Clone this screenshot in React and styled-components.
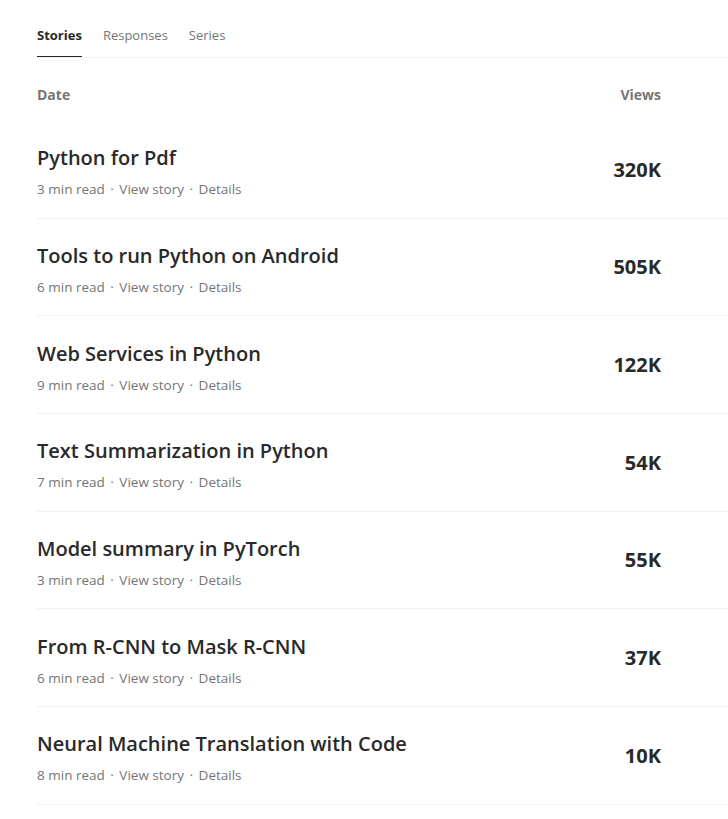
import styled, { createGlobalStyle } from "styled-components";

const stories = [
  { title: "Python for Pdf", read: 3, views: "320K" },
  { title: "Tools to run Python on Android", read: 6, views: "505K" },
  { title: "Web Services in Python", read: 9, views: "122K" },
  { title: "Text Summarization in Python", read: 7, views: "54K" },
  { title: "Model summary in PyTorch", read: 3, views: "55K" },
  { title: "From R-CNN to Mask R-CNN", read: 6, views: "37K" },
  { title: "Neural Machine Translation with Code", read: 8, views: "10K" },
];

const Global = createGlobalStyle`
  body {
    margin: 0;
    background: #fff;
    font-family: "Open Sans", "Noto Sans", sans-serif;
    color: #292929;
  }
`;

export default function App() {
  return (
    <Page>
      <Global />
      <Tabs>
        <Tab className="active">Stories</Tab>
        <Tab>Responses</Tab>
        <Tab>Series</Tab>
      </Tabs>
      <Head>
        <HeadCell>Date</HeadCell>
        <HeadCell className="right">Views</HeadCell>
      </Head>
      {stories.map((s) => (
        <Row key={s.title}>
          <Info>
            <Title>{s.title}</Title>
            <Meta>
              {s.read} min read <Dot>·</Dot> View story <Dot>·</Dot> Details
            </Meta>
          </Info>
          <Views>{s.views}</Views>
        </Row>
      ))}
    </Page>
  );
}

const Page = styled.div`
  padding-left: 37px;
  overflow: hidden;
`;

const Tabs = styled.div`
  display: flex;
  gap: 21px;
  border-bottom: 1px solid #f2f2f2;
`;

const Tab = styled.div`
  padding: 25px 0 11px;
  font-size: 13px;
  line-height: 20px;
  color: #757575;
  border-bottom: 1px solid transparent;

  &.active {
    color: #292929;
    font-weight: 700;
    border-bottom-color: #292929;
  }
`;

const Head = styled.div`
  display: flex;
  justify-content: space-between;
  padding: 27px 0 16px;
`;

const HeadCell = styled.div`
  font-size: 14px;
  line-height: 20px;
  font-weight: 700;
  color: #757575;

  &.right {
    padding-right: 67px;
  }
`;

const Row = styled.div`
  display: flex;
  align-items: center;
  justify-content: space-between;
  height: 97.67px;
  box-sizing: border-box;
  border-bottom: 1px solid #f2f2f2;
`;

const Info = styled.div`
  display: flex;
  flex-direction: column;
  gap: 7px;
  padding-top: 5px;
`;

const Title = styled.div`
  font-size: 20px;
  line-height: 28px;
  font-weight: 600;
  color: #292929;
`;

const Meta = styled.div`
  font-size: 13.5px;
  line-height: 20px;
  color: #757575;
`;

const Dot = styled.span`
  margin: 0 2px;
`;

const Views = styled.div`
  padding-right: 67px;
  font-size: 20px;
  font-weight: 700;
  color: #292929;
`;
